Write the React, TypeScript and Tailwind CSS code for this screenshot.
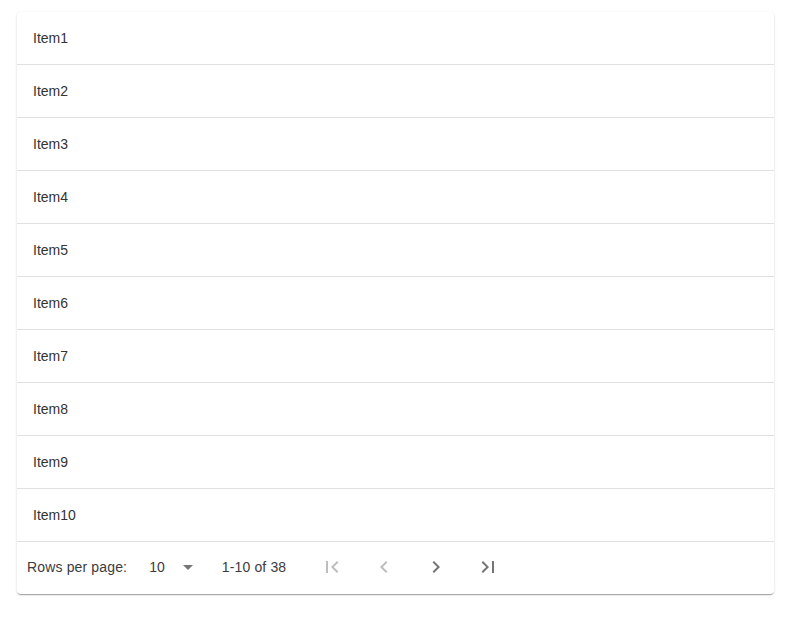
import React from "react";

const items = Array.from({ length: 10 }, (_, i) => `Item${i + 1}`);

function Icon({ d, className }: { d: string; className?: string }) {
  return (
    <svg viewBox="0 0 24 24" width="24" height="24" className={className} fill="currentColor">
      <path d={d} />
    </svg>
  );
}

const paths = {
  first: "M18.41 16.59L13.82 12l4.59-4.59L17 6l-6 6 6 6zM6 6h2v12H6z",
  prev: "M15.41 7.41L14 6l-6 6 6 6 1.41-1.41L10.83 12z",
  next: "M10 6L8.59 7.41 13.17 12l-4.58 4.59L10 18l6-6z",
  last: "M5.59 7.41L10.18 12l-4.59 4.59L7 18l6-6-6-6zM16 6h2v12h-2z",
  drop: "M7 10l5 5 5-5z",
};

export default function App() {
  return (
    <div className="min-h-screen bg-white pt-[12px] pl-[17px] font-['Liberation_Sans',Arial,sans-serif] text-[14px] text-[#333]">
      <div className="w-[757px] overflow-hidden rounded-[4px] bg-white shadow-[0_2px_1px_-1px_rgba(0,0,0,0.2),0_1px_1px_0_rgba(0,0,0,0.14),0_1px_3px_0_rgba(0,0,0,0.12)]">
        <ul>
          {items.map((it) => (
            <li
              key={it}
              className="flex h-[53px] items-center border-b border-[#e0e0e0] pl-[16px]"
            >
              {it}
            </li>
          ))}
        </ul>
        <div className="flex h-[52px] items-center pb-[2px] pl-[10px] text-[#3c3c3c]">
          <span className="tracking-[0.15px]">Rows per page:</span>
          <span className="ml-[22px]">10</span>
          <Icon d={paths.drop} className="ml-[11px] text-[#757575]" />
          <span className="ml-[22px] tracking-[0.15px]">1-10 of 38</span>
          <div className="ml-[22px] flex gap-[4px]">
            <button type="button" disabled className="flex h-[48px] w-[48px] items-center justify-center text-[#bdbdbd]">
              <Icon d={paths.first} />
            </button>
            <button type="button" disabled className="flex h-[48px] w-[48px] items-center justify-center text-[#bdbdbd]">
              <Icon d={paths.prev} />
            </button>
            <button type="button" className="flex h-[48px] w-[48px] items-center justify-center text-[#757575]">
              <Icon d={paths.next} />
            </button>
            <button type="button" className="flex h-[48px] w-[48px] items-center justify-center text-[#757575]">
              <Icon d={paths.last} />
            </button>
          </div>
        </div>
      </div>
    </div>
  );
}
